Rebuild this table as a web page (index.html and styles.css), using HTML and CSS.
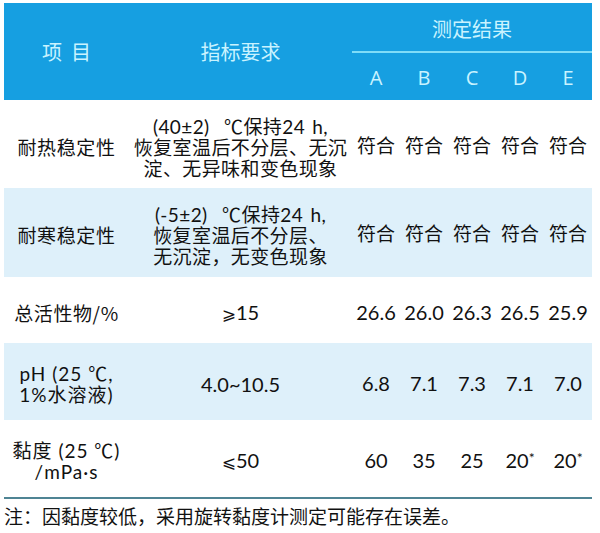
FILE: index.html
```html
<!DOCTYPE html>
<html lang="zh-CN">
<head>
<meta charset="utf-8">
<title>测定结果</title>
<link rel="stylesheet" href="styles.css">
</head>
<body>
<div class="page">
  <table class="spec">
    <colgroup>
      <col class="c-item">
      <col class="c-req">
      <col class="c-res"><col class="c-res"><col class="c-res"><col class="c-res"><col class="c-res">
    </colgroup>
    <thead>
      <tr class="h1">
        <th rowspan="2">项&nbsp;&nbsp;目</th>
        <th rowspan="2">指标要求</th>
        <th colspan="5" class="group">测定结果</th>
      </tr>
      <tr class="h2">
        <th>A</th><th>B</th><th>C</th><th>D</th><th>E</th>
      </tr>
    </thead>
    <tbody>
      <tr class="r1">
        <td class="name">耐热稳定性</td>
        <td class="req">(40±2)&nbsp;&nbsp;℃保持24 h,<br>恢复室温后不分层、无沉<br>淀、无异味和变色现象</td>
        <td>符合</td><td>符合</td><td>符合</td><td>符合</td><td>符合</td>
      </tr>
      <tr class="r2 alt">
        <td class="name">耐寒稳定性</td>
        <td class="req">(-5±2)&nbsp;&nbsp;℃保持24 h,<br>恢复室温后不分层、<br>无沉淀，无变色现象</td>
        <td>符合</td><td>符合</td><td>符合</td><td>符合</td><td>符合</td>
      </tr>
      <tr class="r3">
        <td class="name">总活性物/%</td>
        <td class="req num"><span class="cmp">⩾</span>15</td>
        <td class="num">26.6</td><td class="num">26.0</td><td class="num">26.3</td><td class="num">26.5</td><td class="num">25.9</td>
      </tr>
      <tr class="r4 alt">
        <td class="name narrow">pH (25 ℃,<br>1%水溶液)</td>
        <td class="req num">4.0~10.5</td>
        <td class="num">6.8</td><td class="num">7.1</td><td class="num">7.3</td><td class="num">7.1</td><td class="num">7.0</td>
      </tr>
      <tr class="r5">
        <td class="name narrow">黏度 (25 ℃)<br>/mPa·s</td>
        <td class="req num"><span class="cmp">⩽</span>50</td>
        <td class="num">60</td><td class="num">35</td><td class="num">25</td><td class="num">20<sup>*</sup></td><td class="num">20<sup>*</sup></td>
      </tr>
    </tbody>
  </table>
  <p class="note">注：因黏度较低，采用旋转黏度计测定可能存在误差。</p>
</div>
</body>
</html>
```

FILE: styles.css
```css
html, body {
  margin: 0;
  padding: 0;
  background: #ffffff;
}

.page {
  padding: 3px 8px 0 4px;
  font-family: "Lato", "Noto Sans CJK SC", sans-serif;
  color: #111111;
}

.spec {
  width: 588px;
  border-collapse: collapse;
  table-layout: fixed;
  border-bottom: 2px solid #4f8494;
}

.c-item { width: 125px; }
.c-req { width: 223px; }
.c-res { width: 48px; }

.spec thead {
  background: #169fe1;
  color: #c9f3ff;
}

.spec th {
  font-family: "Noto Sans CJK SC", sans-serif;
  font-weight: 400;
  font-size: 20px;
  padding: 0;
  text-align: center;
  vertical-align: middle;
}

.h1 { height: 49px; }
.h2 { height: 48px; }

.h1 th.group {
  border-bottom: 2px solid #7fdcf8;
  padding-top: 2px;
}

.h2 th {
  font-family: "Open Sans", sans-serif;
  font-size: 20px;
  padding-top: 2px;
}

.spec td {
  padding: 0;
  text-align: center;
  vertical-align: middle;
  font-size: 19px;
  line-height: 21px;
  font-family: "Noto Sans CJK SC", sans-serif;
  font-weight: 400;
}

.spec td.num {
  font-family: "Lato", "Noto Sans CJK SC", sans-serif;
  font-size: 20px;
  padding-top: 4px;
}

.cmp {
  font-family: "DejaVu Sans", sans-serif;
  font-size: 17px;
}

.spec td.name {
  font-family: "Noto Sans CJK SC", sans-serif;
  letter-spacing: 0.6px;
  padding-top: 4px;
}

.spec td.narrow {
  font-family: "Lato", "Noto Sans CJK SC", sans-serif;
  letter-spacing: 1px;
  line-height: 21px;
}

.spec td.req {
  font-family: "Lato", "Noto Sans CJK SC", sans-serif;
  padding-top: 6px;
}

.r1 td.req, .r2 td.req {
  letter-spacing: 0.4px;
  word-spacing: 2px;
}

.r1 { height: 88px; }
.r2 { height: 89px; }
.r3 { height: 66px; }
.r4 { height: 77px; }
.r5 { height: 78px; }

.alt { background: #def0fa; }

.spec sup {
  font-size: 14px;
  vertical-align: 5px;
  line-height: 0;
}

.note {
  margin: 5px 0 0 0;
  font-family: "Noto Sans CJK SC", sans-serif;
  font-size: 19px;
  line-height: 24px;
  color: #111111;
}
```
